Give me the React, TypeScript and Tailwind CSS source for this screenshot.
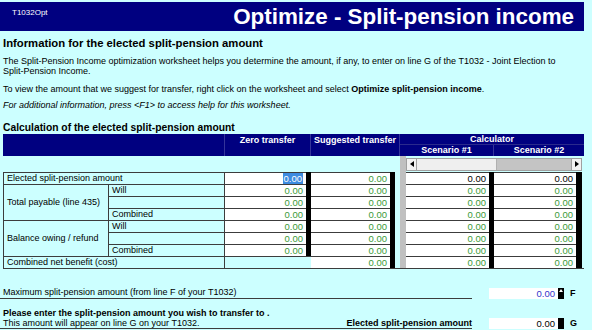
import React from 'react';

const cellB = 'h-[12px] border-t border-[#3c3c3c]';

function Num({ v = '0.00', tone = 'green', sel = false }: { v?: string; tone?: 'green' | 'black'; sel?: boolean }) {
  return (
    <div className={`${cellB} bg-white flex items-center justify-end pr-[3px] text-[9.5px] leading-[11px]`}>
      {sel ? (
        <span className="bg-[#3d8be0] text-white px-[1px]">{v}</span>
      ) : (
        <span className={tone === 'green' ? 'text-[#3a9a3a]' : 'text-black'}>{v}</span>
      )}
    </div>
  );
}

function Bar({ rows = 8, last = 'black' }: { rows?: number; last?: 'black' | 'cyan' }) {
  return (
    <div className="flex flex-col">
      {Array.from({ length: rows }).map((_, i) => (
        <div
          key={i}
          className={`h-[12px] ${i === rows - 1 && last === 'cyan' ? 'bg-[#ccffff] border-t border-[#3c3c3c]' : 'bg-black'}`}
        />
      ))}
    </div>
  );
}

function ValueCol({ w, first, last = 'white' }: { w: string; first: 'green' | 'black' | 'sel'; last?: 'white' | 'cyan' }) {
  return (
    <div className={`flex flex-col ${w}`}>
      {first === 'sel' ? <Num sel /> : <Num tone={first} />}
      {Array.from({ length: 6 }).map((_, i) => (
        <Num key={i} />
      ))}
      {last === 'cyan' ? <div className={`${cellB} bg-[#ccffff]`} /> : <Num />}
    </div>
  );
}

function Group({ title, rows }: { title: string; rows: string[] }) {
  return (
    <div className="flex h-[36px] border-t border-[#3c3c3c]">
      <div className="w-[105px] border-r border-[#3c3c3c] flex items-center pl-[3px]">{title}</div>
      <div className="flex-1 flex flex-col">
        <div className="h-[11px] pl-[3px] leading-[11px]">{rows[0]}</div>
        <div className="h-[12px] border-t border-[#3c3c3c] pl-[3px] leading-[11px]">{rows[1]}</div>
        <div className="h-[12px] border-t border-[#3c3c3c] pl-[3px] leading-[11px]">{rows[2]}</div>
      </div>
    </div>
  );
}

export default function App() {
  return (
    <div className="w-[592px] h-[330px] overflow-hidden bg-[#ccffff] font-['Liberation_Sans',Arial,sans-serif] text-black text-[9px]">
      {/* Title bar */}
      <div className="mt-[2px] h-[29px] w-[584px] bg-[#000080] flex justify-between text-white">
        <div className="pl-[12px] pt-[6px] text-[8px] leading-[9px]">T1032Opt</div>
        <div className="pr-[10px] pt-[1px] text-[22.4px] font-bold leading-[28px]">Optimize - Split-pension income</div>
      </div>

      {/* Info */}
      <div className="px-[3px]">
        <div className="mt-[6px] text-[11.3px] font-bold leading-[13px]">Information for the elected split-pension amount</div>
        <p className="mt-[6px] leading-[10px]">
          The Split-Pension Income optimization worksheet helps you determine the amount, if any, to enter on line G of the T1032 - Joint Election to
          <br />
          Split-Pension Income.
        </p>
        <p className="mt-[8px] leading-[10px]">
          To view the amount that we suggest for transfer, right click on the worksheet and select <span className="font-bold">Optimize split-pension income</span>.
        </p>
        <p className="mt-[6px] leading-[10px] italic">For additional information, press &lt;F1&gt; to access help for this worksheet.</p>
        <div className="mt-[12px] text-[10.3px] font-bold leading-[12px]">Calculation of the elected split-pension amount</div>
      </div>

      {/* Table */}
      <div className="ml-[3px] w-[581px]">
        {/* header */}
        <div className="flex h-[22px] bg-[#000080] text-white font-bold leading-[11px]">
          <div className="w-[222px] border-r border-[#34349a]" />
          <div className="w-[86px] border-r border-[#34349a] text-center pt-[1px]">Zero transfer</div>
          <div className="w-[89px] border-r border-[#34349a] text-center pt-[1px]">Suggested transfer</div>
          <div className="flex-1 flex flex-col">
            <div className="h-[11px] text-center border-b border-[#2a2a8c]">Calculator</div>
            <div className="flex-1 flex">
              <div className="w-[94px] border-r border-[#34349a] text-center">Scenario #1</div>
              <div className="flex-1 text-center">Scenario #2</div>
            </div>
          </div>
        </div>

        {/* scroll row */}
        <div className="flex h-[16px]">
          <div className="w-[397px]" />
          <div className="w-[6px] bg-[#c0c0c0]" />
          <div className="w-[176px] flex items-center">
            <div className="w-full h-[13px] flex border border-[#a0a0a0] bg-[#c4c4c4]">
              <div className="w-[10px] bg-[#f2f2f2] border-r border-[#a0a0a0] flex items-center justify-center">
                <svg width="4" height="6" viewBox="0 0 4 6"><path d="M4 0 L0 3 L4 6 Z" fill="#000" /></svg>
              </div>
              <div className="w-[80px] bg-[#efefef] border-r border-[#b0b0b0]" />
              <div className="flex-1" />
              <div className="w-[10px] bg-[#f2f2f2] border-l border-[#a0a0a0] flex items-center justify-center">
                <svg width="4" height="6" viewBox="0 0 4 6"><path d="M0 0 L4 3 L0 6 Z" fill="#000" /></svg>
              </div>
            </div>
          </div>
        </div>

        {/* data */}
        <div className="flex border-b border-[#3c3c3c]">
          <div className="w-[222px] border-l border-r border-[#3c3c3c] leading-[11px]">
            <div className={`${cellB} pl-[3px]`}>Elected split-pension amount</div>
            <Group title="Total payable (line 435)" rows={['Will', '', 'Combined']} />
            <Group title="Balance owing / refund" rows={['Will', '', 'Combined']} />
            <div className={`${cellB} pl-[3px]`}>Combined net benefit (cost)</div>
          </div>
          <ValueCol w="w-[81px]" first="sel" last="cyan" />
          <div className="w-[5px]"><Bar last="cyan" /></div>
          <ValueCol w="w-[79px]" first="green" />
          <div className="w-[5px]"><Bar /></div>
          <div className="w-[5px]" />
          <div className="w-[6px] bg-[#c0c0c0]" />
          <ValueCol w="w-[83px]" first="black" />
          <div className="w-[5px]"><Bar /></div>
          <ValueCol w="w-[82px]" first="black" />
          <div className="w-[6px]"><Bar /></div>
        </div>
      </div>

      {/* Bottom */}
      <div className="mt-[18px] flex items-end h-[12px]">
        <div className="w-[472px] border-b border-[#3c3c3c] pl-[3px] leading-[11px]">
          Maximum split-pension amount (from line F of your T1032)
        </div>
        <div className="ml-[17px] w-[69px] h-[11px] bg-white text-right pr-[3px] text-[9.5px] leading-[11px] text-[#3333cc]">0.00</div>
        <div className="relative w-[6px] h-[11px] bg-black">
          <div className="absolute top-[1px] left-[1px] w-0 h-0 border-l-[2px] border-r-[2px] border-b-[3px] border-l-transparent border-r-transparent border-b-white" />
        </div>
        <div className="ml-[6px] font-bold leading-[11px]">F</div>
      </div>

      <div className="mt-[9px] pl-[3px] font-bold leading-[10px]">Please enter the split-pension amount you wish to transfer to .</div>
      <div className="flex items-end">
        <div className="w-[472px] border-b border-[#3c3c3c] pl-[3px] flex justify-between items-end leading-[10px]">
          <span>This amount will appear on line G on your T1032.</span>
          <span className="font-bold">Elected split-pension amount</span>
        </div>
        <div className="ml-[17px] w-[69px] h-[11px] bg-white text-right pr-[3px] text-[9.5px] leading-[11px]">0.00</div>
        <div className="w-[6px] h-[11px] bg-black" />
        <div className="ml-[6px] font-bold leading-[11px]">G</div>
      </div>
    </div>
  );
}
